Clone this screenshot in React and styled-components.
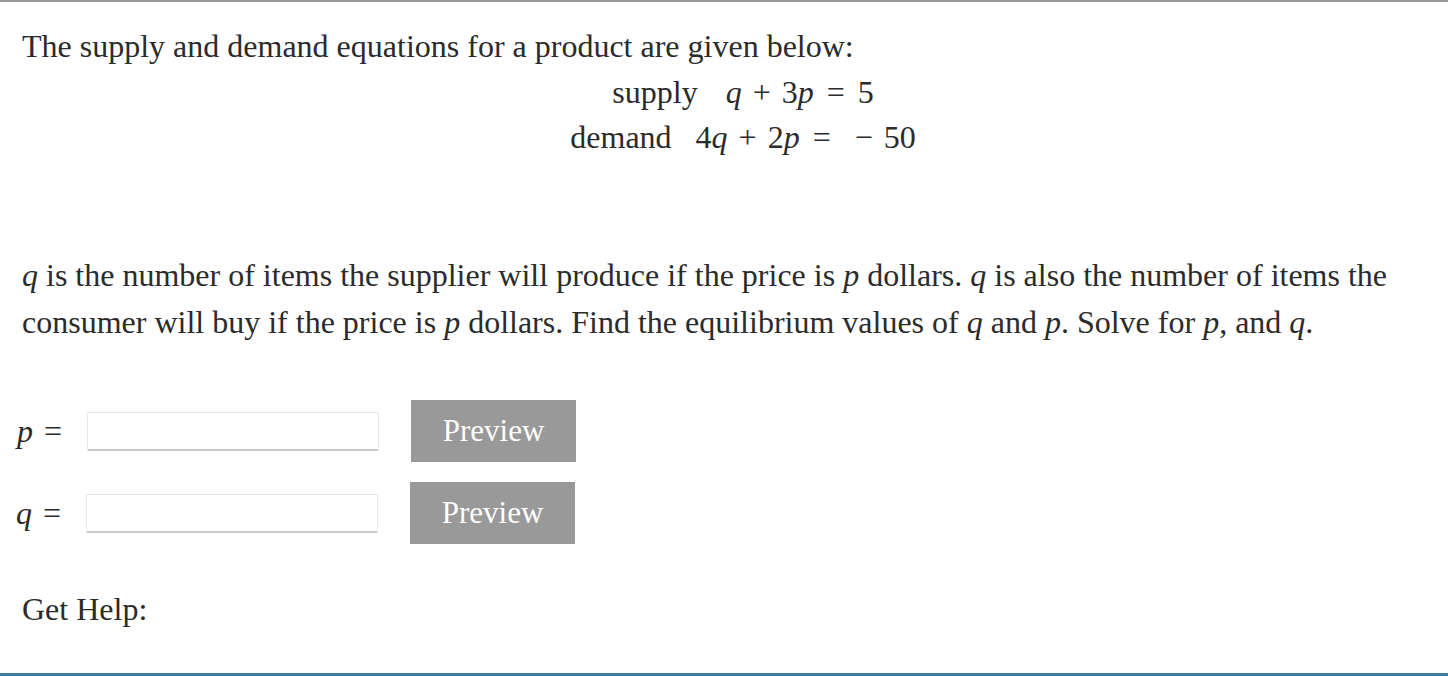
import React from 'react';
import styled, { createGlobalStyle } from 'styled-components';

const Global = createGlobalStyle`
  html, body {
    margin: 0;
    padding: 0;
    background: #ffffff;
  }
  body {
    font-family: 'Liberation Serif', 'Times New Roman', serif;
    color: #2b2b2b;
  }
`;

const Page = styled.div`
  height: 676px;
  box-sizing: border-box;
  border-top: 2px solid #9a9a9a;
  border-bottom: 3px solid #3b7f9c;
  padding: 21px 22px 0;
  font-size: 32px;
  line-height: 47px;
`;

const Para = styled.p`
  margin: 0;
`;

const EqBlock = styled.div`
  padding-left: 38px;
  display: flex;
  flex-direction: column;
  align-items: center;
  line-height: 45px;
  margin-bottom: 92px;
`;

const EqRow = styled.div`
  white-space: nowrap;
`;

const Label = styled.span`
  margin-right: ${p => p.$gap || 24}px;
`;

const V = styled.i`
  font-style: italic;
`;

const Op = styled.span`
  margin: 0 ${p => p.$space || 8}px;
`;

const AnswerList = styled.div`
  margin-top: 54px;
  display: flex;
  flex-direction: column;
  gap: 20px;
`;

const AnswerRow = styled.div`
  display: flex;
  align-items: center;
  margin-left: ${p => p.$shift || 0}px;
`;

const VarLabel = styled.span`
  width: 70px;
  margin-left: -5px;
  white-space: nowrap;
`;

const Field = styled.input`
  width: 292px;
  height: 39px;
  box-sizing: border-box;
  border: 1px solid #e6e6e6;
  border-bottom: 2px solid #c9c9c9;
  border-radius: 2px;
  background: #fff;
  outline: none;
  margin-right: 32px;
`;

const PreviewButton = styled.button`
  width: 165px;
  height: 62px;
  border: none;
  background: #999999;
  color: #ffffff;
  font-family: 'Liberation Serif', 'Times New Roman', serif;
  font-size: 31px;
  padding: 0;
  cursor: pointer;
`;

const Help = styled.div`
  margin-top: 42px;
`;

function AnswerLine({ name, shift }) {
  return (
    <AnswerRow $shift={shift}>
      <VarLabel>
        <V>{name}</V>
        <Op $space={11}>=</Op>
      </VarLabel>
      <Field type="text" />
      <PreviewButton>Preview</PreviewButton>
    </AnswerRow>
  );
}

export default function App() {
  return (
    <Page>
      <Global />
      <Para>The supply and demand equations for a product are given below:</Para>
      <EqBlock>
        <EqRow>
          <Label $gap={28}>supply</Label>
          <V>q</V>
          <Op $space={11}>+</Op>
          3<V>p</V>
          <Op $space={13}>=</Op>5
        </EqRow>
        <EqRow>
          <Label $gap={24}>demand</Label>
          4<V>q</V>
          <Op $space={11}>+</Op>
          2<V>p</V>
          <Op $space={13}>=</Op>
          <Op $space={11}>−</Op>50
        </EqRow>
      </EqBlock>
      <Para>
        <V>q</V> is the number of items the supplier will produce if the price is <V>p</V> dollars.{' '}
        <V>q</V> is also the number of items the consumer will buy if the price is <V>p</V> dollars.
        Find the equilibrium values of <V>q</V> and <V>p</V>. Solve for <V>p</V>, and <V>q</V>.
      </Para>
      <AnswerList>
        <AnswerLine name="p" shift={0} />
        <AnswerLine name="q" shift={-1} />
      </AnswerList>
      <Help>Get Help:</Help>
    </Page>
  );
}
